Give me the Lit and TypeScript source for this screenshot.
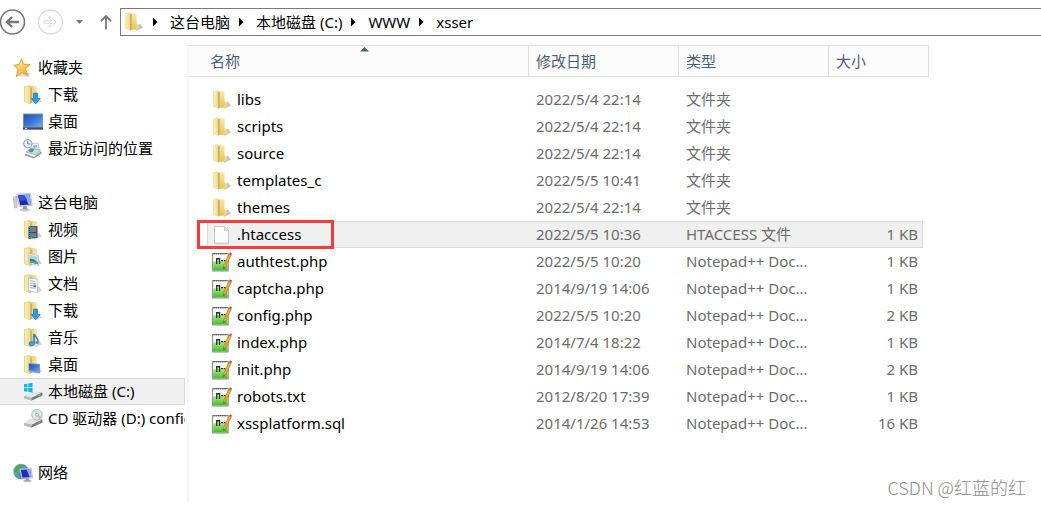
import { LitElement, html, svg, css, nothing } from "lit";
import { customElement, state } from "lit/decorators.js";
import { classMap } from "lit/directives/class-map.js";

interface Place {
  label: string;
  icon: string;
}

interface Group {
  head?: Place;
  items: Place[];
}

interface Entry {
  name: string;
  icon: string;
  date: string;
  type: string;
  size: string;
}

const GROUPS: Group[] = [
  {
    head: { label: "收藏夹", icon: "star" },
    items: [
      { label: "下载", icon: "downloads" },
      { label: "桌面", icon: "screen" },
      { label: "最近访问的位置", icon: "recent" },
    ],
  },
  {
    head: { label: "这台电脑", icon: "computer" },
    items: [
      { label: "视频", icon: "videos" },
      { label: "图片", icon: "pictures" },
      { label: "文档", icon: "documents" },
      { label: "下载", icon: "downloads" },
      { label: "音乐", icon: "music" },
      { label: "桌面", icon: "desktop" },
      { label: "本地磁盘 (C:)", icon: "drive" },
      { label: "CD 驱动器 (D:) config", icon: "cd" },
    ],
  },
  { head: { label: "网络", icon: "network" }, items: [] },
];

const folder = (name: string, date: string): Entry => ({ name, icon: "folder", date, type: "文件夹", size: "" });
const doc = (name: string, date: string, size: string): Entry => ({ name, icon: "notepad", date, type: "Notepad++ Doc...", size });

const ENTRIES: Entry[] = [
  folder("libs", "2022/5/4 22:14"),
  folder("scripts", "2022/5/4 22:14"),
  folder("source", "2022/5/4 22:14"),
  folder("templates_c", "2022/5/5 10:41"),
  folder("themes", "2022/5/4 22:14"),
  { name: ".htaccess", icon: "file", date: "2022/5/5 10:36", type: "HTACCESS 文件", size: "1 KB" },
  doc("authtest.php", "2022/5/5 10:20", "1 KB"),
  doc("captcha.php", "2014/9/19 14:06", "1 KB"),
  doc("config.php", "2022/5/5 10:20", "2 KB"),
  doc("index.php", "2014/7/4 18:22", "1 KB"),
  doc("init.php", "2014/9/19 14:06", "2 KB"),
  doc("robots.txt", "2012/8/20 17:39", "1 KB"),
  doc("xssplatform.sql", "2014/1/26 14:53", "16 KB"),
];

const PATH = ["这台电脑", "本地磁盘 (C:)", "WWW", "xsser"];

const openFolder = svg`
  <path d="M12 19l7-2.5-3-4-4 2z" fill="#9a9a9a" opacity=".45"/>
  <path d="M1.5 1.5L6 .6l8 .9v16H8l-6.5-1z" fill="url(#g-leaf)"/>
  <path d="M1.5 1.5L6 .6l1.500 3V19L1.500 16.800z" fill="url(#g-front)" stroke="#d9c06c" stroke-width=".5"/>
  <path d="M7.500 3.600l1.300-1V17.500L7.500 19z" fill="#c7ab58"/>`;

const diskBody = svg`
  <path d="M1 14.500l6-3.500 12-1 .3 3.500L8.500 18.500 1 16z" fill="#9b9da0"/>
  <path d="M1 14l7-4.500 11.300 1-10.800 5.500z" fill="#e2e4e6"/>
  <path d="M8.500 16l10.800-5.500v3L8.500 18.500z" fill="#77797c"/>
  <path d="M1 14l7.500 2v2.500L1 16.500z" fill="#b9bbbd"/>
  <path d="M15 14l2.500-1.200" stroke="#55dd55" stroke-width="1.200"/>`;

const ICONS: Record<string, unknown> = {
  folder: svg`
    <path d="M12 19l7-3.500-3-4-3 2z" fill="#8d8d8d" opacity=".5"/>
    <path d="M5 1l7.500.500V11l2.200 2.500v3L13 17.500 6 18z" fill="url(#g-gold)"/>
    <path d="M1.500 1.500L5.500.700l1.300 2V18.500L1.500 16.500z" fill="url(#g-front)" stroke="#e0cc86" stroke-width=".4"/>
    <path d="M5.800 2.500l2-1V17l-1.800 1.800z" fill="#cdb162"/>
    <path d="M12.500 11l2.200 2.500v3l-2.200 1z" fill="#f2dd78"/>`,
  star: svg`
    <path d="M5 18l11 1 1-4-7-1z" fill="#999" opacity=".35"/>
    <path d="M8.500.800l2.200 5.400 6.300.200-4.500 4.200 2.300 7.200-5.500-3.200-6.100 4 2-7L.700 7.300l5.600-.9z" fill="url(#g-star)" stroke="#e6952c" stroke-width=".9" stroke-linejoin="round"/>
    <path d="M8.500 2.500L6.800 7.300 9 9.500z" fill="#fff3b5" opacity=".8"/>`,
  downloads: svg`${openFolder}
    <path d="M10.500 8h4v5.500h2.800l-4.600 5.300L8 13.500h2.500z" fill="#2b9be6" stroke="#1672b8" stroke-width=".6"/>`,
  screen: svg`
    <rect x="0" y="1.500" width="20" height="16" fill="#7d8fa8"/>
    <rect x="1" y="2.500" width="18" height="12" fill="url(#g-blue)"/>
    <rect x="0" y="15.500" width="20" height="2" fill="#3c4c66"/>
    <path d="M2 16.500h2" stroke="#dbe6f5" stroke-width="1"/>`,
  recent: svg`
    <path d="M6 4.500l9-.500 1.500 8-9 1z" fill="#eef1f4" stroke="#a8adb2" stroke-width=".6"/>
    <path d="M3 13l5-4 9.500 2-4.500 5z" fill="#cfd6dc" stroke="#8c9399" stroke-width=".6"/>
    <path d="M5 12l3.500-2.500 3 1-2.500 3z" fill="#2f97bd"/>
    <path d="M2 14.500l9 3.500 7.500-6v2.500L11 19.500 2 16.500z" fill="#92979c"/>
    <path d="M10 6.500l4-.200.400 2.200-4 .3z" fill="#7fb5dc"/>
    <circle cx="4.800" cy="4.800" r="4.100" fill="#f2f5f9" stroke="#9aa6b2" stroke-width="1.200"/>
    <path d="M4.800 2v3H7.300" fill="none" stroke="#536f91" stroke-width=".9"/>`,
  computer: svg`
    <path d="M.500 4.500L4 3v11.500l-2.500.300z" fill="#d0d3d6" stroke="#8c9093" stroke-width=".5"/>
    <ellipse cx="12" cy="16.800" rx="5" ry="1.800" fill="#c9cccf"/>
    <path d="M9.500 13h4l.800 3.500h-4z" fill="#979b9f"/>
    <path d="M3.800 1.200l13.700-.7 1.700 12-13 1z" fill="#dfe2e6" stroke="#9297a0" stroke-width=".5"/>
    <path d="M5 2.200l11.500-.6 1.400 9.800-10.800.900z" fill="#1726b5"/>
    <path d="M11 1.900l5.500-.3 1.400 9.800-2.400.200z" fill="#91a9ee"/>
    <path d="M5 2.200l6-.3 3.500 5-7.900 1z" fill="#3150db"/>`,
  videos: svg`${openFolder}
    <path d="M5.500 6.500l9-.500v12l-9 .800z" fill="#303a3e"/>
    <path d="M7 7l6-.300v5.200l-6 .5zM7 13.200l6-.5v4.800l-6 .5z" fill="#2e91c9"/>
    <path d="M9 8.500l3-.5.500 3-2.500 1zM8 15l3-2 1.500 2-2 2z" fill="#bd6a33"/>
    <path d="M6.200 7v11.500M13.900 6.500v11.500" stroke="#cbd6db" stroke-width=".7" stroke-dasharray="1 1"/>`,
  pictures: svg`${openFolder}
    <path d="M6 6.500l9.500 2v10L6 16z" fill="#f7f8fa" stroke="#9fa7ae" stroke-width=".5"/>
    <path d="M6.800 7.700l8 1.700v7.800l-8-2z" fill="#a8d5f2"/>
    <path d="M6.800 11.500l4 1 4 3v1.700l-8-2z" fill="#2e7498"/>
    <path d="M6.800 13.500l8 1.700v2l-8-2z" fill="#5aa67c"/>`,
  documents: svg`${openFolder}
    <path d="M5.500 4l9 1.200v13.300l-9-1.700z" fill="#f8f9fb" stroke="#a9adb2" stroke-width=".6"/>
    <path d="M7 6.800l5.500.8M7 9l6 .8M7 11.300l3 .4M7 13.600l5.500.8" stroke="#8ba7d0" stroke-width=".8"/>
    <path d="M10.500 10.500l2.500.4v2.600l-2.500-.4z" fill="#5676b6"/>`,
  music: svg`${openFolder}
    <path d="M11 6v9.500M11 6c1 3 4.500 3.500 4 8" fill="none" stroke="#2586c9" stroke-width="1.700"/>
    <ellipse cx="8.800" cy="15.800" rx="2.800" ry="2.200" fill="#3d9ddd" stroke="#1d70ab" stroke-width=".5"/>
    <ellipse cx="14" cy="14.500" rx="1.800" ry="1.500" fill="#3d9ddd"/>`,
  desktop: svg`${openFolder}
    <path d="M5.500 8l11.500 1v9.500l-11.500-2z" fill="#8598b8"/>
    <path d="M6.300 8.900l9.900.900v7l-9.900-1.700z" fill="url(#g-blue)"/>`,
  drive: svg`${diskBody}
    <path d="M1 2.200l3.400-.5v3.600H1zM5.200 1.600L9.500 1v4.300H5.200zM1 6.100h3.400v3.600L1 9.200zM5.200 6.100h4.300v4.300l-4.300-.6z" fill="#0cb5ea"/>`,
  cd: svg`${diskBody}
    <circle cx="14" cy="5.800" r="5.300" fill="#e3e6e8" stroke="#9fa3a6" stroke-width=".7"/>
    <path d="M14 5.800L10.500 2a5 5 0 0 1 3-1.400z" fill="#b9e0bb"/>
    <path d="M14 5.800l4.900 1.700a5 5 0 0 1-2.400 2.900z" fill="#c9b9df"/>
    <circle cx="14" cy="5.800" r="1.500" fill="#fff" stroke="#888" stroke-width=".6"/>`,
  network: svg`
    <circle cx="8" cy="8.500" r="7.800" fill="url(#g-globe)"/>
    <path d="M3 3.500C5 1 9 1 10.500 2L9 5 5.500 6 4.500 9.500 1.500 9C.800 7 1.500 5 3 3.500z" fill="#4caa43"/>
    <path d="M3 11.500l3 1 1 3.400C5 15.500 3.500 14 3 11.500z" fill="#5ab84b"/>
    <ellipse cx="14.500" cy="17.800" rx="4" ry="1.500" fill="#b9bdc2"/>
    <path d="M12.500 15h3l.500 3h-3z" fill="#989ca2"/>
    <path d="M6.500 5.800l11.500-.8 1.500 9.800-11 1z" fill="#e3e6ea" stroke="#8b9098" stroke-width=".5"/>
    <path d="M7.700 6.800l9.500-.6 1.200 7.700-9 .8z" fill="#1730bb"/>
    <path d="M13.500 6.400l3.700-.2 1.200 7.700-1.700.2z" fill="#93abee"/>`,
  file: svg`
    <path d="M2.500 1.500h10l4 4v12.500h-14z" fill="#fcfcfc" stroke="#bdbdbd" stroke-width=".8"/>
    <path d="M12.500 1.500v4h4z" fill="#e2e2e2" stroke="#bdbdbd" stroke-width=".6"/>
    <path d="M2 18.800h15" stroke="#c9c9c9" stroke-width=".7"/>`,
  notepad: svg`
    <rect x=".600" y="1.500" width="15.600" height="17.500" fill="#f6f8f6" stroke="#7d827d" stroke-width=".9"/>
    <path d="M1.100 9.500l14.600-2v11H1.100z" fill="url(#g-green)"/>
    <path d="M1.500 1.800h13.500" stroke="#555c5c" stroke-width="1.500" stroke-dasharray="1.200 1"/>
    <path d="M4.700 6v6M4.700 7l2.800-.5v5.500M9 8.700h2.200M12 8.700h1.500" fill="none" stroke="#253225" stroke-width="1.300"/>
    <path d="M17 2l2.300 1-5.500 11.500-2.200 2.200.100-3.200z" fill="#f0a92c" stroke="#9b6a19" stroke-width=".5"/>
    <path d="M17 2l1-1.600 2 .900-.700 1.700z" fill="#cf3a34"/>
    <path d="M11.700 15l-.1 1.700 1.200-1.200z" fill="#333"/>`,
};

const icon = (name: string) =>
  svg`<svg class="icon" viewBox="0 0 20 20" aria-hidden="true">${ICONS[name]}</svg>`;

@customElement("app-root")
export class AppRoot extends LitElement {
  @state() private place = "本地磁盘 (C:)";
  @state() private selected = ".htaccess";

  static styles = css`
    :host {
      display: flex;
      flex-direction: column;
      min-height: 100vh;
      box-sizing: border-box;
      position: relative;
      overflow: hidden;
      background: #fff;
      color: #000;
      font: 15px/27px "Noto Sans", "Noto Sans CJK SC", sans-serif;
    }
    button {
      border: 0;
      padding: 0;
      background: none;
      color: inherit;
      font: inherit;
    }
    a {
      color: inherit;
      text-decoration: none;
    }
    ul, ol {
      list-style: none;
      margin: 0;
      padding: 0;
    }
    .defs {
      position: absolute;
      width: 0;
      height: 0;
    }
    .icon {
      width: 20px;
      height: 20px;
      flex: none;
    }
    .toolbar {
      display: flex;
      align-items: center;
      padding-top: 8px;
    }
    .tool {
      display: flex;
      flex: none;
    }
    .forward { margin-left: 11px; }
    .history { margin-left: 12px; }
    .up { margin: 0 8px 0 16px; }
    .address {
      flex: 1;
      display: flex;
      align-items: center;
      height: 26px;
      padding-left: 3px;
      border: 1px solid #7a7a7a;
      border-right: 0;
    }
    .path {
      display: flex;
      white-space: nowrap;
    }
    .crumb {
      display: flex;
      align-items: center;
    }
    .crumb svg { margin: 0 11px 0 8px; }
    .main {
      flex: 1;
      display: flex;
      padding-top: 9px;
    }
    .side {
      flex: none;
      width: 185px;
      display: flex;
      flex-direction: column;
      gap: 27px;
      margin: 9px 2px 0 0;
    }
    .place {
      display: flex;
      align-items: center;
      gap: 5px;
      height: 27px;
      padding-left: 13px;
      box-sizing: border-box;
      white-space: nowrap;
      overflow: hidden;
    }
    .child { padding-left: 23px; }
    .current {
      background: #f0f0f0;
      box-shadow: inset 0 1px #dadada, inset 0 -1px #dadada, inset -1px 0 #dadada;
    }
    .content {
      flex: 1;
      min-width: 0;
      margin-bottom: 2px;
      border-left: 2px solid #f6f6f6;
    }
    .files { display: block; }
    .files thead, .files tbody { display: block; }
    .line {
      display: grid;
      grid-template-columns: 340px 150px 150px 100px;
      width: max-content;
    }
    .files th, .files td {
      display: block;
      padding: 0;
      font-weight: 400;
      text-align: left;
      white-space: nowrap;
    }
    .heads {
      background: #fcfcfc;
      color: #4c607a;
      border: solid #e0e0e0;
      border-width: 1px 0;
    }
    .files .head {
      position: relative;
      height: 30px;
      line-height: 30px;
      border-right: 1px solid #e0e0e0;
      padding-left: 7px;
    }
    .files .head:first-child { padding-left: 21px; }
    .sort {
      position: absolute;
      top: 0;
      left: 50%;
    }
    .files tbody { padding: 9px 0 0 18px; }
    .row {
      grid-template-columns: 321px 150px 130px 115px;
      color: #6d6d6d;
    }
    .files td { padding-left: 8px; }
    .files .name {
      position: relative;
      display: flex;
      align-items: center;
      gap: 5px;
      padding-left: 5px;
      color: #000;
    }
    .files .size {
      padding: 0 5px 0 0;
      text-align: right;
    }
    .selected {
      background: #f0f0f0;
      box-shadow: inset 0 0 0 1px #dadada;
    }
    .mark {
      position: absolute;
      inset: -1px auto -1px -10px;
      width: 131px;
      border: 3px solid #f93a3a;
    }
    .watermark {
      position: absolute;
      right: 15px;
      bottom: 4px;
      color: #8e8e8e;
      font: 300 18px/27px "Noto Sans CJK SC", sans-serif;
    }
  `;

  private renderPlace(p: Place, child: boolean) {
    const current = p.label === this.place;
    return html`<a
      class=${classMap({ place: true, child, current })}
      href="#"
      aria-current=${current ? "true" : nothing}
      @click=${(e: Event) => { e.preventDefault(); this.place = p.label; }}
    >${icon(p.icon)}<span>${p.label}</span></a>`;
  }

  private renderRow(f: Entry) {
    const selected = f.name === this.selected;
    return html`<tr class=${classMap({ line: true, row: true, selected })} @click=${() => { this.selected = f.name; }}>
      <td class="name">${icon(f.icon)}<span>${f.name}</span>${selected ? html`<span class="mark"></span>` : nothing}</td>
      <td>${f.date}</td>
      <td>${f.type}</td>
      <td class="size">${f.size}</td>
    </tr>`;
  }

  render() {
    return html`
      <svg class="defs" aria-hidden="true">
        <linearGradient id="g-front"><stop offset="0" stop-color="#fbeeb6"/><stop offset="1" stop-color="#eed88c"/></linearGradient>
        <linearGradient id="g-leaf"><stop offset=".4" stop-color="#e3c977"/><stop offset="1" stop-color="#f8e9ae"/></linearGradient>
        <linearGradient id="g-gold" x2="0" y2="1"><stop offset="0" stop-color="#f5e9b4"/><stop offset="1" stop-color="#e5c64f"/></linearGradient>
        <linearGradient id="g-star" x2="1" y2="1"><stop offset="0" stop-color="#ffe88a"/><stop offset="1" stop-color="#fba52a"/></linearGradient>
        <linearGradient id="g-blue" x2="1" y2="1"><stop offset="0" stop-color="#1d4fb4"/><stop offset=".6" stop-color="#3f7fdd"/><stop offset="1" stop-color="#75aff2"/></linearGradient>
        <linearGradient id="g-globe" x2="1" y2="1"><stop offset="0" stop-color="#8fd0ee"/><stop offset="1" stop-color="#164fa0"/></linearGradient>
        <linearGradient id="g-green" x2="0" y2="1"><stop offset="0" stop-color="#c5eda2"/><stop offset="1" stop-color="#3fbd27"/></linearGradient>
      </svg>

      <header class="toolbar">
        <button class="tool" aria-label="后退">
          <svg width="26" height="26" viewBox="0 0 26 26" fill="none" stroke="#777">
            <circle cx="12.500" cy="13" r="12" stroke-width="1.600"/>
            <path d="M19 13H7.500M12 8l-5 5 5 5" stroke-width="2.400"/>
          </svg>
        </button>
        <button class="tool forward" aria-label="前进" disabled>
          <svg width="26" height="26" viewBox="0 0 26 26" fill="none" stroke="#dcdcdc">
            <circle cx="13.500" cy="13" r="12" stroke-width="1.300"/>
            <path d="M7 11.800h8L11.500 8.200H14l5 4.800-5 4.800h-2.500l3.500-3.600H7z" stroke-width="1"/>
          </svg>
        </button>
        <button class="tool history" aria-label="最近的位置">
          <svg width="9" height="6" viewBox="0 0 9 6"><path d="M1 1h7L4.500 5z" fill="#777"/></svg>
        </button>
        <button class="tool up" aria-label="上移">
          <svg width="12" height="16" viewBox="0 0 12 16" fill="none" stroke="#777" stroke-width="1.800"><path d="M6 15.500V2.500M1 7l5-5 5 5"/></svg>
        </button>
        <nav class="address" aria-label="地址">
          ${icon("folder")}
          <ol class="path">
            ${PATH.map((p) => html`<li class="crumb">
              <svg width="7" height="10" viewBox="0 0 7 10" aria-hidden="true"><path d="M1 .500L5.500 5 1 9.500z"/></svg>
              <a href="#">${p}</a>
            </li>`)}
          </ol>
        </nav>
      </header>

      <div class="main">
        <nav class="side" aria-label="导航">
          ${GROUPS.map((g) => html`<div>
            ${g.head ? this.renderPlace(g.head, false) : nothing}
            <ul>${g.items.map((p) => html`<li>${this.renderPlace(p, true)}</li>`)}</ul>
          </div>`)}
        </nav>
        <main class="content">
          <table class="files">
            <thead>
              <tr class="line heads">
                <th class="head"><button>名称</button>
                  <svg class="sort" width="11" height="6" viewBox="0 0 11 6" aria-hidden="true"><path d="M1 5.500L5.500 1 10 5.500z" fill="#4c607a"/></svg>
                </th>
                <th class="head"><button>修改日期</button></th>
                <th class="head"><button>类型</button></th>
                <th class="head"><button>大小</button></th>
              </tr>
            </thead>
            <tbody>${ENTRIES.map((f) => this.renderRow(f))}</tbody>
          </table>
        </main>
      </div>
      <div class="watermark">CSDN @红蓝的红</div>
    `;
  }
}
